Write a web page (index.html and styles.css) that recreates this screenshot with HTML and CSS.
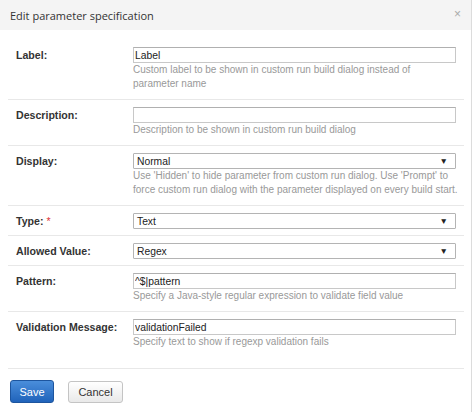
FILE: index.html
```html
<!DOCTYPE html>
<html>
<head>
<meta charset="utf-8">
<link rel="stylesheet" href="styles.css">
</head>
<body>
<div class="dialog">
  <div class="header">
    <span class="title">Edit parameter specification</span>
    <span class="close">×</span>
  </div>
  <div class="body">
    <div class="row first">
      <label class="lbl">Label:</label>
      <div class="field">
        <input class="text" type="text" value="Label">
        <div class="help">Custom label to be shown in custom run build dialog instead of<br>parameter name</div>
      </div>
    </div>
    <div class="row">
      <label class="lbl">Description:</label>
      <div class="field">
        <input class="text" type="text" value="">
        <div class="help">Description to be shown in custom run build dialog</div>
      </div>
    </div>
    <div class="row">
      <label class="lbl">Display:</label>
      <div class="field">
        <div class="select"><span>Normal</span><span class="arrow">▼</span></div>
        <div class="help">Use 'Hidden' to hide parameter from custom run dialog. Use 'Prompt' to<br>force custom run dialog with the parameter displayed on every build start.</div>
      </div>
    </div>
    <div class="row">
      <label class="lbl">Type: <span class="req">*</span></label>
      <div class="field">
        <div class="select"><span>Text</span><span class="arrow">▼</span></div>
      </div>
    </div>
    <div class="row">
      <label class="lbl">Allowed Value:</label>
      <div class="field">
        <div class="select"><span>Regex</span><span class="arrow">▼</span></div>
      </div>
    </div>
    <div class="row">
      <label class="lbl">Pattern:</label>
      <div class="field">
        <input class="text" type="text" value="^$|pattern">
        <div class="help">Specify a Java-style regular expression to validate field value</div>
      </div>
    </div>
    <div class="row last">
      <label class="lbl">Validation Message:</label>
      <div class="field">
        <input class="text" type="text" value="validationFailed">
        <div class="help">Specify text to show if regexp validation fails</div>
      </div>
    </div>
  </div>
  <div class="footer">
    <button class="btn save">Save</button>
    <button class="btn cancel">Cancel</button>
  </div>
</div>
</body>
</html>
```
FILE: styles.css
```css
html, body {
  margin: 0;
  padding: 0;
  background: #fff;
}
body {
  font-family: "Liberation Sans", Arial, sans-serif;
  color: #333;
}
.dialog {
  width: 471px;
  height: 412px;
  border-right: 1px solid #dcdcdc;
  background: #fff;
}
.header {
  height: 30px;
  background: #f4f4f4;
  display: flex;
  align-items: center;
  justify-content: space-between;
  padding: 0 10px 0 10px;
  box-sizing: border-box;
}
.title {
  font-family: "Open Sans", sans-serif;
  font-size: 11px;
  color: #333;
}
.close {
  font-size: 12px;
  color: #aaa;
  margin-top: -3px;
}
.body {
  padding: 10px 7px 0 8px;
}
.row {
  display: grid;
  grid-template-columns: 117px 323px;
  padding: 7px 8px 6px 8px;
  border-bottom: 1px solid #e8e8e8;
}
.row.last {
  padding-bottom: 17px;
}
.lbl {
  font-weight: bold;
  font-size: 10.6px;
  line-height: 16px;
  color: #333;
}
.req {
  color: #d33;
  font-weight: normal;
}
.field {
  display: flex;
  flex-direction: column;
}
.text {
  box-sizing: border-box;
  width: 323px;
  height: 16px;
  margin: 0;
  padding: 0 1px;
  border: 1px solid #c8c8c8;
  border-top-color: #b0b0b0;
  font-family: "Liberation Sans", Arial, sans-serif;
  font-size: 10.3px;
  color: #222;
  outline: none;
}
.select {
  box-sizing: border-box;
  width: 323px;
  height: 16px;
  border: 1px solid #b4b4b4;
  border-radius: 1px;
  display: flex;
  align-items: center;
  justify-content: space-between;
  padding: 0 7px 0 3px;
  font-size: 10.3px;
  color: #222;
  background: #fff;
}
.arrow {
  font-size: 8.5px;
  color: #222;
}
.help {
  font-size: 10px;
  line-height: 14px;
  color: #999;
  margin-bottom: 2px;
  white-space: nowrap;
}
.footer {
  display: flex;
  align-items: center;
  gap: 14px;
  padding: 11px 0 0 10px;
}
.btn {
  font-family: "Liberation Sans", Arial, sans-serif;
  font-size: 11px;
  border-radius: 3px;
  padding: 0;
  margin: 0;
}
.save {
  width: 44px;
  height: 23px;
  color: #fff;
  border: 1px solid #1d559e;
  background: linear-gradient(#4a8edb, #2063ba);
}
.cancel {
  width: 55px;
  height: 22px;
  color: #333;
  border: 1px solid #c4c4c4;
  background: linear-gradient(#ffffff, #e9e9e9);
}
```
